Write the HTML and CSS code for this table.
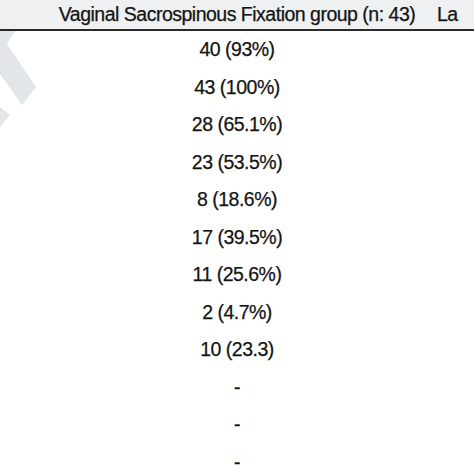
FILE: index.html
```html
<!DOCTYPE html>
<html lang="en">
<head>
<meta charset="utf-8">
<title>Outcomes table</title>
<link rel="stylesheet" href="styles.css">
</head>
<body>
<div class="page">
  <table class="data">
    <colgroup>
      <col class="c-label">
      <col class="c-vsf">
      <col class="c-lap">
    </colgroup>
    <thead>
      <tr>
        <th></th>
        <th class="center">Vaginal Sacrospinous Fixation group (n: 43)</th>
        <th class="left">La</th>
      </tr>
    </thead>
    <tbody>
      <tr><td></td><td>40 (93%)</td><td></td></tr>
      <tr><td></td><td>43 (100%)</td><td></td></tr>
      <tr><td></td><td>28 (65.1%)</td><td></td></tr>
      <tr><td></td><td>23 (53.5%)</td><td></td></tr>
      <tr><td></td><td>8 (18.6%)</td><td></td></tr>
      <tr><td></td><td>17 (39.5%)</td><td></td></tr>
      <tr><td></td><td>11 (25.6%)</td><td></td></tr>
      <tr><td></td><td>2 (4.7%)</td><td></td></tr>
      <tr><td></td><td>10 (23.3)</td><td></td></tr>
      <tr><td></td><td>-</td><td></td></tr>
      <tr><td></td><td>-</td><td></td></tr>
      <tr><td></td><td>-</td><td></td></tr>
    </tbody>
  </table>
  <svg class="watermark" width="60" height="140" viewBox="0 0 60 140" aria-hidden="true">
    <polygon points="0,31 15,31 7,44 36,87 22,105 0,74" />
    <polygon points="0,107 10,115 0,127" />
  </svg>
</div>
</body>
</html>
```
FILE: styles.css
```css
html, body {
  margin: 0;
  padding: 0;
  background: #ffffff;
}
body {
  width: 474px;
  height: 474px;
  overflow: hidden;
}
.page {
  position: relative;
  width: 474px;
  height: 474px;
  overflow: hidden;
  font-family: "Liberation Sans", Arial, sans-serif;
  color: #141414;
  -webkit-text-stroke: 0.25px #141414;
}
.data {
  border-collapse: collapse;
  table-layout: fixed;
  width: 474px;
  font-size: 19.5px;
  letter-spacing: -0.5px;
}
.c-label { width: 50px; }
.c-vsf { width: 374px; }
.c-lap { width: 50px; }
.data th {
  background: #eef0f1;
  font-weight: normal;
  height: 29px;
  line-height: 29px;
  padding: 0;
  white-space: nowrap;
  border-bottom: 2px solid #2a2a2a;
}
.data th.center { text-align: center; }
.data th.left { text-align: left; padding-left: 13px; }
.data td {
  height: 37.5px;
  padding: 0;
  text-align: center;
  line-height: 37.5px;
  white-space: nowrap;
}
.watermark {
  position: absolute;
  left: 0;
  top: 0;
  fill: #dfe2e4;
  opacity: 0.85;
}
```
